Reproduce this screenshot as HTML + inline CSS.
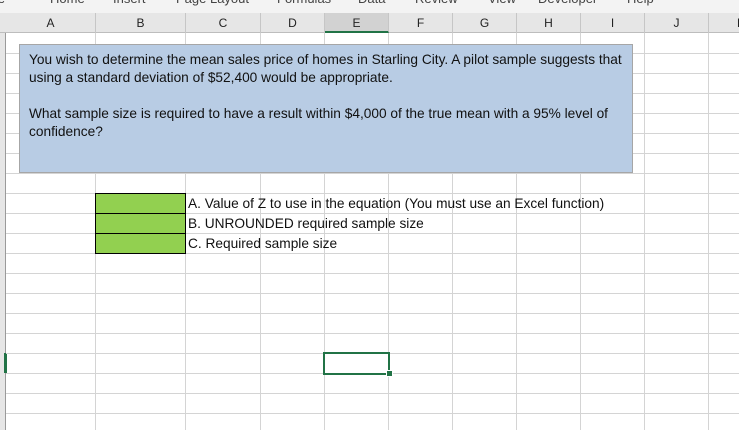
<!DOCTYPE html>
<html><head><style>
body{margin:0;width:739px;height:430px;overflow:hidden;background:#fff;font-family:"Liberation Sans",sans-serif;position:relative}
.menu{position:absolute;left:0;top:0;width:739px;height:13px;background:#f3f3f3;overflow:hidden}
.menu span{position:absolute;top:-9px;font-size:13px;color:#444}
.hdr{position:absolute;left:0;top:13px;width:739px;height:20px;background:#e6e6e6;border-bottom:1px solid #bdbdbd;box-sizing:border-box}
.ch{position:absolute;top:13px;height:20px;line-height:20px;text-align:center;font-size:12px;color:#222;border-right:1px solid #c6c6c6;box-sizing:border-box}
.vl{position:absolute;top:33px;width:1px;height:397px;background:#d4d4d4}
.hl{position:absolute;left:6px;width:733px;height:1px;background:#d4d4d4}
.rh{position:absolute;left:0;top:33px;width:5px;height:397px;background:#e6e6e6;border-right:1px solid #9a9a9a}
</style></head><body>
<div class="menu">
<span style="left:-8px">ile</span><span style="left:50px">Home</span><span style="left:113px">Insert</span><span style="left:176px">Page Layout</span><span style="left:277px">Formulas</span><span style="left:358px">Data</span><span style="left:415px">Review</span><span style="left:488px">View</span><span style="left:538px">Developer</span><span style="left:627px">Help</span>
</div>
<div class="hdr"></div>
<div class="ch" style="left:6px;width:90px">A</div>
<div class="ch" style="left:96px;width:90px">B</div>
<div class="ch" style="left:186px;width:75px">C</div>
<div class="ch" style="left:261px;width:64px">D</div>
<div class="ch" style="left:325px;width:64px;background:#d2d2d2;border-bottom:2px solid #217346">E</div>
<div class="ch" style="left:389px;width:64px">F</div>
<div class="ch" style="left:453px;width:64px">G</div>
<div class="ch" style="left:517px;width:64px">H</div>
<div class="ch" style="left:581px;width:64px">I</div>
<div class="ch" style="left:645px;width:64px">J</div>
<div class="ch" style="left:709px;width:64px;text-align:left;padding-left:28px">K</div>
<div class="rh"></div>
<div style="position:absolute;left:4px;top:353px;width:3px;height:20px;background:#217346"></div>
<div class="vl" style="left:95px"></div><div class="vl" style="left:185px"></div><div class="vl" style="left:260px"></div><div class="vl" style="left:324px"></div><div class="vl" style="left:388px"></div><div class="vl" style="left:452px"></div><div class="vl" style="left:516px"></div><div class="vl" style="left:580px"></div><div class="vl" style="left:644px"></div><div class="vl" style="left:708px"></div>
<div class="hl" style="top:53px"></div><div class="hl" style="top:73px"></div><div class="hl" style="top:93px"></div><div class="hl" style="top:113px"></div><div class="hl" style="top:133px"></div><div class="hl" style="top:153px"></div><div class="hl" style="top:173px"></div><div class="hl" style="top:193px"></div><div class="hl" style="top:213px"></div><div class="hl" style="top:233px"></div><div class="hl" style="top:253px"></div><div class="hl" style="top:273px"></div><div class="hl" style="top:293px"></div><div class="hl" style="top:313px"></div><div class="hl" style="top:333px"></div><div class="hl" style="top:353px"></div><div class="hl" style="top:373px"></div><div class="hl" style="top:393px"></div><div class="hl" style="top:413px"></div>
<div style="position:absolute;left:19px;top:44px;width:614px;height:129px;background:#b8cce4;border:1px solid #a6a6a6;box-sizing:border-box;padding:6px 9px;font-size:13.7px;line-height:18px;color:#111">You wish to determine the mean sales price of homes in Starling City. A pilot sample suggests that using a standard deviation of $52,400 would be appropriate.<br><br>What sample size is required to have a result within $4,000 of the true mean with a 95% level of confidence?</div>
<div style="position:absolute;left:95px;top:193px;width:91px;height:61px;background:#92d050;border:1px solid #000;box-sizing:border-box"></div>
<div style="position:absolute;left:95px;top:213px;width:91px;height:1px;background:#000"></div>
<div style="position:absolute;left:95px;top:233px;width:91px;height:1px;background:#000"></div>
<div style="position:absolute;left:188px;top:194px;font-size:13.7px;line-height:20px;color:#111;white-space:nowrap">A. Value of Z to use in the equation (You must use an Excel function)<br>B. UNROUNDED required sample size<br>C. Required sample size</div>
<div style="position:absolute;left:323px;top:352px;width:67px;height:23px;border:2px solid #217346;box-sizing:border-box"></div>
<div style="position:absolute;left:386px;top:370px;width:5px;height:5px;background:#217346;border:1px solid #fff"></div>
</body></html>
